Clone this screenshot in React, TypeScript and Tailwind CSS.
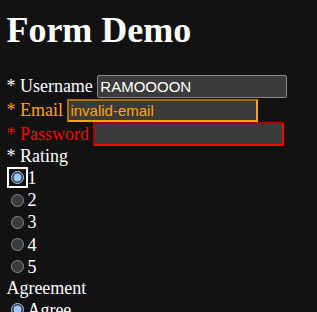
import React from "react";

export default function App() {
  const ratings = [1, 2, 3, 4, 5];
  return (
    <div className="min-h-screen bg-[#121212] text-white font-['Liberation_Serif',serif] text-[18px] leading-[normal] pl-[6.4px] pt-[10px] [color-scheme:dark] overflow-hidden">
      <h1 className="text-[36px] font-bold leading-[41px] mb-[24px]">Form Demo</h1>
      <form>
        <div className="h-[23.67px] whitespace-nowrap">
          <label>* Username</label>{" "}
          <input
            type="text"
            defaultValue="RAMOOOON"
            className="h-[23px] w-[190px] align-baseline border border-[#858585] rounded-[2px] bg-[#3b3b3b] pl-[2px] font-['Liberation_Sans',sans-serif] text-[15px] leading-[normal] text-white"
          />
        </div>
        <div className="h-[23.67px] whitespace-nowrap text-[#ffa500]">
          <label>* Email</label>{" "}
          <input
            type="text"
            defaultValue="invalid-email"
            className="h-[23px] w-[191px] align-baseline border-2 [border-style:inset] border-[#ffa500] bg-[#3b3b3b] pl-[1px] font-['Liberation_Sans',sans-serif] text-[15px] leading-[normal] text-[#ffa500]"
          />
        </div>
        <div className="h-[23.67px] whitespace-nowrap text-[#ff0000]">
          <label>* Password</label>{" "}
          <input
            type="password"
            className="h-[24px] w-[191px] align-baseline border-2 [border-style:inset] border-[#ff0000] bg-[#3b3b3b] pl-[1px] font-['Liberation_Sans',sans-serif] text-[15px] leading-[normal] text-white"
          />
        </div>
        <div className="h-[20.7px] leading-[20.7px]">* Rating</div>
        {ratings.map((r) => (
          <label key={r} className="flex items-start h-[22.3px] whitespace-nowrap">
            <input
              type="radio"
              name="rating"
              defaultChecked={r === 1}
              className={
                r === 1
                  ? "shrink-0 w-[13px] h-[13px] ml-[5px] mr-[3px] mt-[4.6px] rounded-[2px] outline-2 outline-white outline-offset-2"
                  : "shrink-0 w-[13px] h-[13px] ml-[5px] mr-[3px] mt-[4.6px]"
              }
            />
            <span className="mt-[1.2px] leading-[20.7px]">{r}</span>
          </label>
        ))}
        <div className="h-[20.7px] leading-[20.7px]">Agreement</div>
        <label className="flex items-start h-[22.3px] whitespace-nowrap">
          <input
            type="radio"
            name="agree"
            defaultChecked
            className="shrink-0 w-[13px] h-[13px] ml-[5px] mr-[3px] mt-[4.6px]"
          />
          <span className="mt-[1.2px] leading-[20.7px]">Agree</span>
        </label>
      </form>
    </div>
  );
}
